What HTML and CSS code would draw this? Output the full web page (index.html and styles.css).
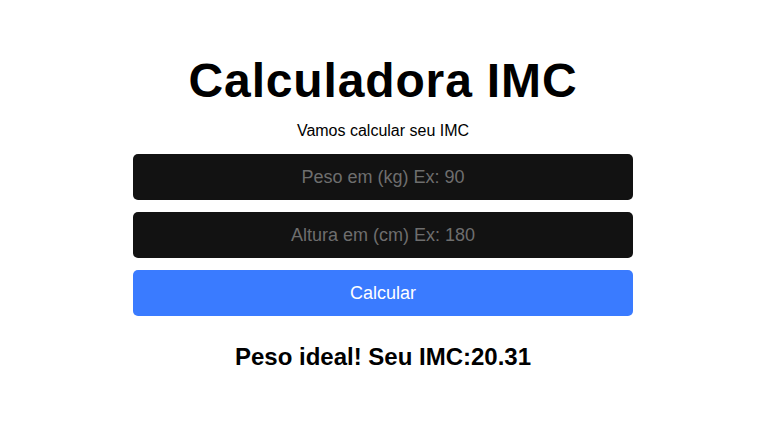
FILE: index.html
```html
<!DOCTYPE html>
<html lang="pt-BR">
<head>
<meta charset="utf-8">
<title>Calculadora IMC</title>
<link rel="stylesheet" href="styles.css">
</head>
<body>
<main class="app">
  <h1 class="title">Calculadora IMC</h1>
  <p class="subtitle">Vamos calcular seu IMC</p>
  <form class="form">
    <input class="field" type="text" inputmode="decimal" placeholder="Peso em (kg) Ex: 90">
    <input class="field" type="text" inputmode="decimal" placeholder="Altura em (cm) Ex: 180">
    <button class="btn" type="button">Calcular</button>
  </form>
  <h2 class="result">Peso ideal! Seu IMC:20.31</h2>
</main>
</body>
</html>
```

FILE: styles.css
```css
html, body {
  margin: 0;
  padding: 0;
  background: #ffffff;
}

body {
  font-family: "Liberation Sans", Arial, sans-serif;
  color: #000000;
  padding-right: 10px;
}

.app {
  width: 500px;
  margin: 0 auto;
  display: flex;
  flex-direction: column;
  align-items: center;
  text-align: center;
}

.title {
  font-size: 48px;
  font-weight: bold;
  margin: 53px 0 14px;
  letter-spacing: 0.85px;
}

.subtitle {
  font-size: 16px;
  margin: 0 0 14px;
}

.form {
  width: 100%;
  display: flex;
  flex-direction: column;
  gap: 12px;
}

.field {
  box-sizing: border-box;
  width: 100%;
  height: 46px;
  border: none;
  border-radius: 5px;
  background: #121212;
  color: #ffffff;
  font-family: "Liberation Sans", Arial, sans-serif;
  font-size: 18px;
  text-align: center;
  outline: none;
  padding: 0 10px;
}

.field::placeholder {
  color: #6e6e6e;
}

.btn {
  box-sizing: border-box;
  width: 100%;
  height: 46px;
  border: none;
  border-radius: 5px;
  background: #3a7bff;
  color: #ffffff;
  font-family: "Liberation Sans", Arial, sans-serif;
  font-size: 18px;
  cursor: pointer;
}

.result {
  font-size: 24px;
  font-weight: bold;
  margin: 27px 0 0;
}
```
